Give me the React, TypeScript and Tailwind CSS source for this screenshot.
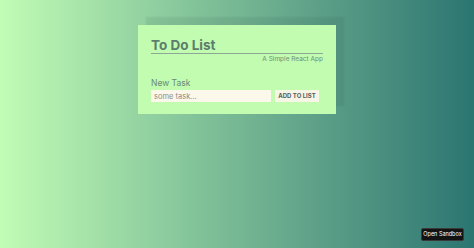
export default function App() {
  return (
    <div className="relative w-full min-h-screen h-[248px] bg-linear-to-r from-[#c1fdb5] to-[#2b7571] font-['Inter',sans-serif] overflow-hidden">
      {/* card */}
      <div className="pt-[25px]">
        <div className="mx-auto w-[198px] h-[89px] bg-[#c1fcb1] shadow-[8px_-8px_2px_rgba(20,60,40,0.09)] pl-[13px] pr-[13px] pt-[13px]">
          <h1 className="text-[13.5px] leading-[15px] font-bold text-[#5d7d6c] border-b border-[#8ea895]">
            To Do List
          </h1>
          <p className="text-right text-[6.5px] leading-[10px] text-[#6f8e79]">A Simple React App</p>

          <label className="block mt-[14px] text-[8.5px] leading-[10px] text-[#6a8a75]">New Task</label>
          <div className="flex items-center gap-[4px] mt-[2px]">
            <input
              className="w-[120px] h-[12px] bg-[#fbf7ea] px-[3px] text-[7.5px] text-[#7f8078] placeholder:text-[#8c8c84] outline-none"
              placeholder="some task..."
            />
            <button className="w-[44px] h-[12px] bg-[#f7f6e6] text-[6px] font-bold text-[#555c58] leading-[12px]">
              ADD TO LIST
            </button>
          </div>
        </div>
      </div>

      {/* sandbox badge */}
      <div className="absolute right-[10px] bottom-[7px] w-[43px] h-[13px] bg-[#131313] border border-[#3a3a3a] rounded-[2px] flex items-center justify-center text-[5.5px] text-white">
        Open Sandbox
      </div>
    </div>
  );
}
